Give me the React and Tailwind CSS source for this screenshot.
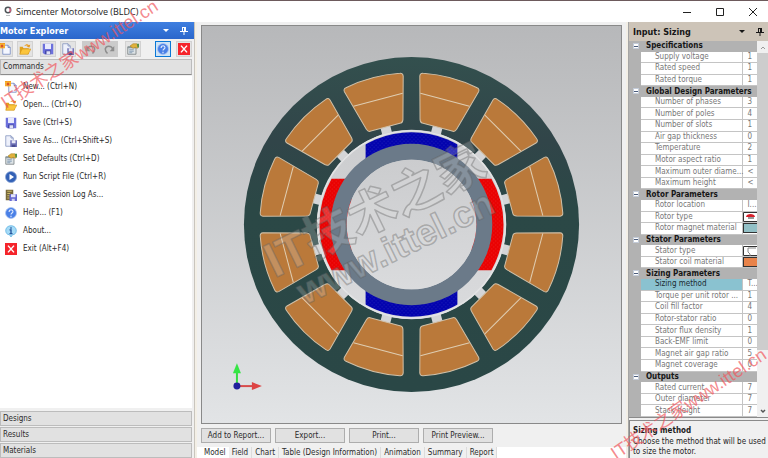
import { useState } from "react";

const parameterGroups = [
  {
    title: "Specifications",
    rows: [
      ["Supply voltage", "1"],
      ["Rated speed", "1"],
      ["Rated torque", "1"],
    ],
  },
  {
    title: "Global Design Parameters",
    rows: [
      ["Number of phases", "3"],
      ["Number of poles", "4"],
      ["Number of slots", "1"],
      ["Air gap thickness", "0"],
      ["Temperature", "2"],
      ["Motor aspect ratio", "1"],
      ["Maximum outer diame...", "<"],
      ["Maximum height", "<"],
    ],
  },
  {
    title: "Rotor Parameters",
    rows: [
      ["Rotor location", "I..."],
      ["Rotor type", "rotor"],
      ["Rotor magnet material", "magnet"],
    ],
  },
  {
    title: "Stator Parameters",
    rows: [
      ["Stator type", "stator"],
      ["Stator coil material", "coil"],
    ],
  },
  {
    title: "Sizing Parameters",
    rows: [
      ["Sizing method", "T..."],
      ["Torque per unit rotor ...", "1"],
      ["Coil fill factor", "4"],
      ["Rotor-stator ratio", "0"],
      ["Stator flux density", "1"],
      ["Back-EMF limit", "0"],
      ["Magnet air gap ratio", "5"],
      ["Magnet coverage", "0"],
    ],
  },
  {
    title: "Outputs",
    rows: [
      ["Rated current", "7"],
      ["Outer diameter", "7"],
      ["Stack height", "7"],
    ],
  },
];

function NewIcon() {
  return (
    <svg viewBox="0 0 16 16" className="size-3 shrink-0">
      <path d="M5 3h7l3 3v9H5z" fill="#f4f7ff" stroke="#6f84bd" />
      <path d="M12 3v3h3" fill="#b8c6ee" stroke="#6f84bd" />
      <path d="M0 0h8v7H0z" fill="#f59a1c" />
      <path d="M4 0l1 2 3-1-1 3 1 2-3 0-1 2-1-2-3 0 1-2-1-3 3 1z" fill="#f7c23c" />
      <circle cx="4" cy="4" r="2" fill="#d9532c" />
    </svg>
  );
}

function OpenIcon() {
  return (
    <svg viewBox="0 0 16 16" className="size-3 shrink-0">
      <path d="M1 15V5h4l1 2h7v8z" fill="#e0a21f" />
      <path d="M1 15l3-7h12l-4 7z" fill="#fbc53c" stroke="#c98a13" strokeWidth=".6" />
      <path d="M7 4c2-3 5-3 6-1l2-1-1 4-4-1 2-1c-1-1-3-1-5 0z" fill="#e89a20" />
    </svg>
  );
}

function SaveIcon() {
  return (
    <svg viewBox="0 0 16 16" className="size-3 shrink-0">
      <path d="M1 1h14v14H3l-2-2z" fill="#6c70dc" />
      <path d="M4 1h8v7H4z" fill="#e8eafc" />
      <path d="M4 10h8v5H4z" fill="#4347a6" />
      <path d="M6 11h5v4H6z" fill="#dfe1f6" />
    </svg>
  );
}

function SaveAsIcon() {
  return (
    <svg viewBox="0 0 16 16" className="size-3 shrink-0">
      <path d="M1 1h7l3 3v11H1z" fill="#eef1fb" stroke="#7f8fbb" />
      <path d="M8 1v3h3" fill="none" stroke="#7f8fbb" />
      <path d="M7 7h9v9H7z" fill="#7073b8" />
      <path d="M9 7h5v4H9z" fill="#e6e7f5" />
      <path d="M9 13h5v3H9z" fill="#494d91" />
    </svg>
  );
}

function DefaultsIcon() {
  return (
    <svg viewBox="0 0 16 16" className="size-3 shrink-0">
      <path d="M1 5h11v10H1z" fill="#dde3e6" stroke="#71797c" />
      <path d="M1 5h11v2H1z" fill="#8b979c" />
      <path d="M3 9h6M3 11h6M3 13h4" stroke="#6f8aa8" />
      <path d="M4 4l4-3h5l3 3-2 3-3-1-3 1z" fill="#e0b13d" stroke="#a37a1b" strokeWidth=".7" />
      <path d="M13 1h3v5h-2z" fill="#5a8f45" />
    </svg>
  );
}

function RunIcon() {
  return (
    <svg viewBox="0 0 16 16" className="size-3 shrink-0">
      <circle cx="8" cy="8" r="7.4" fill="#3361b6" stroke="#8fa9d8" />
      <path d="M6 4l6 4-6 4z" fill="#fff" />
    </svg>
  );
}

function LogIcon() {
  return (
    <svg viewBox="0 0 16 16" className="size-3 shrink-0">
      <path d="M1 1h10v14H1z" fill="#77683a" />
      <path d="M3 3h6M3 6h4M3 9h3M3 12h3" stroke="#e9d77c" />
      <path d="M6 7h10v9H6z" fill="#6568d0" />
      <path d="M8 7h6v4H8z" fill="#e6e7fa" />
      <path d="M9 13h4v3H9z" fill="#d0d2f0" />
    </svg>
  );
}

function HelpIcon() {
  return (
    <svg viewBox="0 0 16 16" className="size-3 shrink-0">
      <circle cx="8" cy="8" r="7.3" fill="#4a80e6" stroke="#a9c3f3" />
      <path d="M5.5 6.5c0-4 5.5-3.5 5 0C10.200 8 8.200 8 8 10M8 11.500v2" fill="none" stroke="#dfe9fc" strokeWidth="1.6" />
    </svg>
  );
}

function AboutIcon() {
  return (
    <svg viewBox="0 0 16 16" className="size-3 shrink-0">
      <path d="M8 1c9 0 9 12 2 12l-2 3-2-3C-1 13-1 1 8 1z" fill="#a5dbf7" stroke="#5ab0e2" />
      <path d="M8 3v2M6 6.5h2V11M6 11.500h4" fill="none" stroke="#24559c" strokeWidth="1.8" />
    </svg>
  );
}

function ExitIcon() {
  return (
    <svg viewBox="0 0 16 16" className="size-3 shrink-0">
      <path d="M0 0h16v16H0z" fill="#f5242b" />
      <path d="M4 3.500l8 9M12 3.500l-8 9" stroke="#fff" strokeWidth="2" />
    </svg>
  );
}

function UndoIcon({ flip }) {
  return (
    <svg viewBox="0 0 16 16" className="size-3 shrink-0">
      <g transform={flip ? "translate(16 0) scale(-1 1)" : undefined}>
        <path d="M3 8c2-5 9-5 10 0 0 3-1 4-3 6" fill="none" stroke="#8d8d8d" strokeWidth="2" />
        <path d="M1 4v7h6z" fill="#8d8d8d" />
      </g>
    </svg>
  );
}

function PinIcon() {
  return (
    <svg viewBox="0 0 8 8" className="size-2">
      <path d="M2 0h4v4H2zM0 4h8v1H0zM3.500 5h1v3h-1zM3 1v3h1V1z" fill="currentColor" fillRule="evenodd" />
    </svg>
  );
}

function ArrowIcon() {
  return (
    <svg viewBox="0 0 6 3" className="h-[3px] w-[6px]">
      <path d="M0 0h6L3 3z" fill="currentColor" />
    </svg>
  );
}

const commands = [
  { label: "New... (Ctrl+N)", Icon: NewIcon },
  { label: "Open... (Ctrl+O)", Icon: OpenIcon },
  { label: "Save (Ctrl+S)", Icon: SaveIcon },
  { label: "Save As... (Ctrl+Shift+S)", Icon: SaveAsIcon },
  { label: "Set Defaults (Ctrl+D)", Icon: DefaultsIcon },
  { label: "Run Script File (Ctrl+R)", Icon: RunIcon },
  { label: "Save Session Log As...", Icon: LogIcon },
  { label: "Help... (F1)", Icon: HelpIcon },
  { label: "About...", Icon: AboutIcon },
  { label: "Exit (Alt+F4)", Icon: ExitIcon },
];

function TitleBar() {
  return (
    <header className="flex h-[22px] shrink-0 items-center border-t border-[#6d5a5c] bg-white pr-[11px] pl-2">
      <svg viewBox="0 0 8 11" className="-ml-1 mr-1 h-[11px] w-2">
        <circle cx="4" cy="4" r="2.700" fill="none" stroke="#4d5357" strokeWidth="1.500" />
        <path d="M5.500 2a2.700 2.700 0 0 1 0 4" fill="none" stroke="#d2617e" strokeWidth="1.500" />
        <path d="M2 9h4v1H2z" fill="#b9bdc0" />
      </svg>
      <h1 className="font-['Open_Sans',sans-serif] text-[9px] leading-3 text-[#222]">Simcenter Motorsolve (BLDC)</h1>
      <div className="ml-auto flex gap-[25px] text-[#222]">
        <button aria-label="Minimize">
          <svg viewBox="0 0 8 8" className="size-2"><path d="M0 4.500h8" stroke="currentColor" /></svg>
        </button>
        <button aria-label="Maximize">
          <svg viewBox="0 0 8 8" className="size-2"><path d="M.5.500h7v7h-7z" fill="none" stroke="currentColor" /></svg>
        </button>
        <button aria-label="Close">
          <svg viewBox="0 0 8 8" className="size-2"><path d="M0 0l8 8M8 0L0 8" stroke="currentColor" /></svg>
        </button>
      </div>
    </header>
  );
}

function ToolButton({ label, children }) {
  return (
    <button aria-label={label} className="flex h-4 w-4 items-center justify-center border border-[#d2d2d2] bg-[#e3e3e3]">
      {children}
    </button>
  );
}

function Explorer() {
  return (
    <aside className="flex w-[195px] shrink-0 flex-col border-r border-[#c9c5bd] bg-[#f0f0f0]">
      <div className="flex h-[17px] shrink-0 items-center gap-[11px] bg-linear-to-b from-[#3f7fe0] to-[#2a66cb] pr-[6px] text-white">
        <h2 className="mr-auto text-[9px] leading-3 font-bold">Motor Explorer</h2>
        <ArrowIcon />
        <PinIcon />
      </div>
      <div className="flex h-5 shrink-0 items-center justify-between pr-[2px]">
        <div className="-ml-[3px] flex gap-1">
          <ToolButton label="New"><NewIcon /></ToolButton>
          <ToolButton label="Open"><OpenIcon /></ToolButton>
        </div>
        <div className="flex gap-1">
          <ToolButton label="Save"><SaveIcon /></ToolButton>
          <ToolButton label="Save As"><SaveAsIcon /></ToolButton>
        </div>
        <div className="flex">
          <button aria-label="Undo" disabled className="flex h-4 w-[18px] items-center justify-center bg-[#cbcbcb]"><UndoIcon /></button>
          <button aria-label="Redo" disabled className="flex h-4 w-[18px] items-center justify-center bg-[#cbcbcb]"><UndoIcon flip /></button>
        </div>
        <ToolButton label="Set Defaults"><DefaultsIcon /></ToolButton>
        <div className="ml-2 flex gap-[5px]">
          <button aria-label="Help" className="flex h-4 w-4 items-center justify-center border border-[#0a78d6] bg-[#cfe3f5]"><HelpIcon /></button>
          <ToolButton label="Exit"><ExitIcon /></ToolButton>
        </div>
      </div>
      <div className="mr-[2px] flex min-h-0 flex-1 flex-col gap-px">
        <button className="flex h-4 shrink-0 items-center border border-[#bcbcbc] border-b-[#8c8c8c] bg-[#e1e1e1] pl-[2px]">Commands</button>
        <ul className="flex-1 bg-white pt-[2px]">
          {commands.map(({ label, Icon }) => (
            <li key={label}>
              <button className="flex h-[18px] w-full items-center gap-[6px] pl-[5px] text-left">
                <Icon />
                {label}
              </button>
            </li>
          ))}
        </ul>
        <div className="flex flex-col gap-px pt-[2px]">
          {["Designs", "Results", "Materials"].map((name) => (
            <button key={name} className="flex h-[15px] items-center border border-[#bcbcbc] bg-[#e1e1e1] pl-[2px]">{name}</button>
          ))}
        </div>
      </div>
    </aside>
  );
}

const slotAngles = [15, 45, 75, 105, 135, 165, 195, 225, 255, 285, 315, 345];

function MotorView() {
  return (
    <svg viewBox="0 0 420 398" className="size-full" role="img" aria-label="Motor cross section">
      <defs>
        <clipPath id="blueClip"><path d="M-46-100h92v200h-92z" /></clipPath>
        <clipPath id="redClip"><path d="M-100-46h200v92h-200z" /></clipPath>
        <linearGradient id="stator" x1="0" y1="0" x2="0" y2="1">
          <stop offset="0" stopColor="#33504e" />
          <stop offset=".25" stopColor="#314549" />
          <stop offset=".45" stopColor="#2b4846" />
          <stop offset="1" stopColor="#2a4746" />
        </linearGradient>
        <linearGradient id="bore" x1="0" y1="0" x2="0" y2="1">
          <stop offset="0" stopColor="#cbccce" />
          <stop offset="1" stopColor="#dadbdd" />
        </linearGradient>
        <pattern id="mesh" width="4" height="4" patternUnits="userSpaceOnUse">
          <path d="M0 0h1v1H0zM2 2h1v1H2z" fill="#fff" opacity=".12" />
        </pattern>
      </defs>
      <g transform="translate(210 199)">
        <circle r="168" fill="url(#stator)" />
        {slotAngles.map((angle) => (
          <g key={angle} transform={`rotate(${angle})`}>
            <path d="M-5-102L-5-92H5L5-102z" fill="#d4d5d7" />
            <path
              d="M-16-101H16Q18-101 19-104L30.500-146Q31-149 28-149.500Q0-155-28-149.500Q-31-149-30.500-146L-19-104Q-18-101-16-101z"
              fill="#ba793a"
              stroke="#d0c0a8"
            />
            <path d="M-25.500-129.500h51" stroke="#dfcdb2" />
          </g>
        ))}
        <circle r="95" fill="url(#bore)" />
        <circle r="94" fill="none" stroke="#e3e4e5" strokeWidth="1.500" />
        <g clipPath="url(#blueClip)">
          <circle r="92.500" fill="#0303ae" />
          <circle r="92.500" fill="url(#mesh)" />
          <path d="M-46-66h92V66h-92z" fill="url(#bore)" />
        </g>
        <g clipPath="url(#redClip)">
          <path d="M-80-46A92.500 92.500 0 0 0-80 46H-60V-46zM80-46A92.500 92.500 0 0 1 80 46H60V-46z" fill="#ea0202" />
          <path d="M-80-46A92.500 92.500 0 0 0-80 46H-60V-46zM80-46A92.500 92.500 0 0 1 80 46H60V-46z" fill="url(#mesh)" />
        </g>
        <circle r="73" fill="none" stroke="#6b7a89" strokeWidth="16" />
        <circle r="65" fill="url(#bore)" />
      </g>
      <g>
        <path d="M35 361V345" stroke="#35dc42" strokeWidth="2" />
        <path d="M35 338l4 10h-8z" fill="#35e544" />
        <path d="M35 361h16" stroke="#d84b4b" strokeWidth="2" />
        <path d="M60 361l-10-4v8z" fill="#dd4444" />
        <circle cx="35" cy="361" r="3.500" fill="#20209c" />
      </g>
      <g
        className="font-['Liberation_Sans','Noto_Sans_CJK_SC',sans-serif] font-bold"
        fill="#e4e4e4"
        fillOpacity=".22"
        stroke="#606060"
        strokeOpacity=".38"
        strokeWidth="1.500"
        strokeLinejoin="round"
      >
        <text transform="translate(73 253) rotate(-26)" fontSize="49">IT技术之家</text>
        <text transform="translate(103 280) rotate(-26)" fontSize="37">www.ittel.cn</text>
      </g>
    </svg>
  );
}

function Workspace() {
  const [tab, setTab] = useState("Model");
  const tabs = ["Model", "Field", "Chart", "Table (Design Information)", "Animation", "Summary", "Report"];

  return (
    <main className="flex min-w-0 flex-1 flex-col bg-[#f0f0f0] pt-[3px]">
      <div className="mx-1 min-h-0 flex-1 border border-[#898989] bg-linear-to-b from-[#b7b8ba] to-[#e2e4e6]">
        <MotorView />
      </div>
      <div className="mx-1 mt-1 flex shrink-0 gap-1">
        {["Add to Report...", "Export...", "Print...", "Print Preview..."].map((name) => (
          <button key={name} className="h-[15px] w-[70px] border border-[#adadad] bg-[#e1e1e1] leading-3">{name}</button>
        ))}
      </div>
      <div role="tablist" className="mt-1 flex h-[11px] shrink-0 bg-white pl-1">
        {tabs.map((name) => (
          <button
            key={name}
            role="tab"
            aria-selected={tab === name}
            onClick={() => setTab(name)}
            className={tab === name ? "bg-white px-[3px] leading-[11px]" : "border-r border-[#dcdcdc] bg-[#f0f0f0] px-[3px] leading-[10px]"}
          >
            {name}
          </button>
        ))}
      </div>
    </main>
  );
}

function ParameterValue({ value }) {
  if (value === "magnet") return <span className="block h-[10px] w-4 border border-[#333] bg-[#92c0c6]" />;
  if (value === "coil") return <span className="block h-[10px] w-4 border border-[#333] bg-[#e8834a]" />;
  if (value === "rotor") {
    return (
      <svg viewBox="0 0 16 10" className="h-[10px] w-4">
        <path d="M.5.500h16v9H.5z" fill="#fff" stroke="#333" />
        <path d="M3 5c0-4 9-4 9 0z" fill="#d8202b" />
        <path d="M5 5h6v2H5z" fill="#999" />
      </svg>
    );
  }
  if (value === "stator") {
    return (
      <svg viewBox="0 0 16 10" className="h-[10px] w-4">
        <path d="M.5.500h16v9H.5z" fill="#fff" stroke="#333" />
        <path d="M13 2H5v4l2 2v2" fill="none" stroke="#888" />
      </svg>
    );
  }
  return <span className="pl-1">{value}</span>;
}

function ParameterTable() {
  return (
    <table className="h-[376px] w-full table-fixed border-collapse text-left whitespace-nowrap">
      <colgroup>
        <col className="w-3" />
        <col />
        <col className="w-[14px]" />
      </colgroup>
      {parameterGroups.map((group) => (
        <tbody key={group.title}>
          <tr className="leading-[10px]">
            <td className="bg-[#b2b2b2] p-0">
              <button aria-label={`Collapse ${group.title}`} className="ml-1 flex size-[6px] items-center justify-center border border-[#c3cbd8] bg-white">
                <span className="h-px w-1 bg-[#4a5c7c]" />
              </button>
            </td>
            <th colSpan="2" className="bg-[#b2b2b2] p-0 pl-[5px] font-bold text-[#161616]">{group.title}</th>
          </tr>
          {group.rows.map(([name, value]) => (
            <tr key={name} className="leading-[10px] text-[#777]">
              <td className="bg-[#b2b2b2] p-0" />
              <td className={name === "Sizing method" ? "border-b border-[#c4c4c4] bg-[#8ac2d0] p-0 pl-[14px] text-[#1b2b30]" : "border-b border-[#c4c4c4] bg-white p-0 pl-[14px]"}>{name}</td>
              <td className="overflow-hidden border-b border-l border-[#c4c4c4] bg-white p-0"><ParameterValue value={value} /></td>
            </tr>
          ))}
        </tbody>
      ))}
    </table>
  );
}

function InputPanel() {
  return (
    <aside className="flex w-[140px] shrink-0 flex-col border-l border-[#a5a5a5] bg-[#f0f0f0]">
      <div className="flex h-[19px] shrink-0 items-center gap-[11px] bg-[#cdc4b8] pr-1 pl-1 text-[#161616]">
        <h2 className="mr-auto text-[9px] leading-3 font-bold">Input: Sizing</h2>
        <ArrowIcon />
        <PinIcon />
      </div>
      <div className="flex min-h-0 flex-1 overflow-hidden border-b border-[#8a8a8a]">
        <div className="min-w-0 flex-1 bg-[#b2b2b2]">
          <ParameterTable />
        </div>
        <div className="flex w-[11px] shrink-0 flex-col items-center bg-[#f0f0f0] text-[#555]">
          <svg viewBox="0 0 6 12" className="h-3 w-[6px]"><path d="M1 8l2-2 2 2" fill="none" stroke="#999" /></svg>
          <div className="h-[79%] w-full bg-[#cdcdcd]" />
          <svg viewBox="0 0 6 12" className="mt-auto h-3 w-[6px]"><path d="M1 5l2 2 2-2" fill="none" stroke="currentColor" strokeWidth="1.500" /></svg>
        </div>
      </div>
      <div className="mt-[2px] h-[38px] shrink-0 border-t border-l border-[#8a8a8a] pt-1 pl-[3px] whitespace-nowrap text-[#1c1c1c]">
        <h3 className="leading-3 font-bold">Sizing method</h3>
        <p className="leading-[10px]">Choose the method that will be used<br />to size the motor.</p>
      </div>
    </aside>
  );
}

function Watermarks() {
  return (
    <>
      <svg viewBox="0 0 180 120" className="pointer-events-none absolute top-0 left-0 h-[120px] w-[180px]">
        <text
          transform="translate(6 109) rotate(-33)"
          fontSize="18"
          fill="#f0565c"
          fillOpacity=".7"
          className="font-['Liberation_Sans','Noto_Sans_CJK_SC',sans-serif]"
        >
          IT技术之家www.ittel.cn
        </text>
      </svg>
      <svg viewBox="0 0 180 120" className="pointer-events-none absolute right-0 bottom-0 h-[120px] w-[180px]">
        <text
          transform="translate(28 122) rotate(-34)"
          fontSize="18"
          fill="#f0565c"
          fillOpacity=".7"
          className="font-['Liberation_Sans','Noto_Sans_CJK_SC',sans-serif]"
        >
          IT技术之家www.ittel.cn
        </text>
      </svg>
    </>
  );
}

export default function App() {
  return (
    <div className="relative flex h-screen flex-col overflow-hidden bg-[#f0f0f0] font-['DejaVu_Sans_Condensed','DejaVu_Sans',sans-serif] text-[8px] text-[#2b2b2b]">
      <TitleBar />
      <div className="flex min-h-0 flex-1 gap-[2px] bg-[#f3efe6]">
        <Explorer />
        <Workspace />
        <InputPanel />
      </div>
      <Watermarks />
    </div>
  );
}
